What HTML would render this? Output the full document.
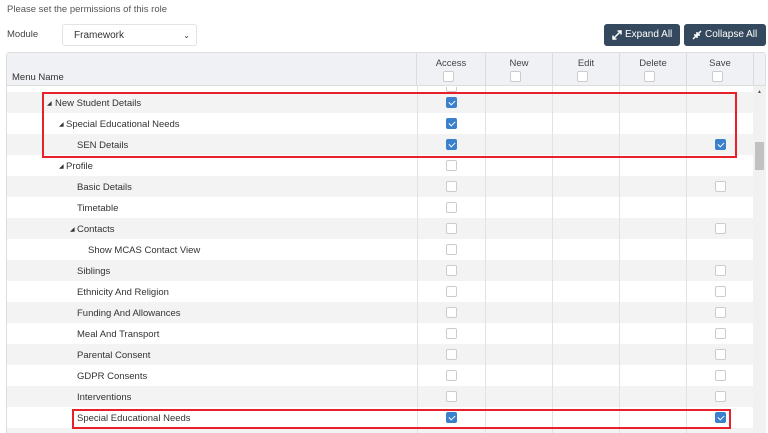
<!DOCTYPE html>
<html style="width:768px;height:433px;overflow:hidden"><head><style>
*{margin:0;padding:0;box-sizing:border-box}
body{width:768px;height:433px;overflow:hidden;background:#fff;font-family:"Liberation Sans",sans-serif;font-size:9.5px;color:#333;position:relative}
.a{position:absolute}
.btn{position:absolute;top:24px;height:22px;background:#34495e;color:#fff;border-radius:3px;font-size:10px;line-height:22px;padding-left:21px}
.row{position:absolute;left:7px;width:746px;height:21px}
.g{background:#f3f3f3}
.row span{position:absolute;top:1px;line-height:21px;white-space:nowrap}
.vl{position:absolute;top:86px;height:347px;width:1px;background:#e2e2e2}
.cb{position:absolute;width:11px;height:11px;border:1px solid #ccc;border-radius:2px;background:#fff}
.ck{background:#3a80cc;border-color:#3a80cc}
.ck:after{content:"";position:absolute;left:3px;top:1px;width:3px;height:5px;border:solid #fff;border-width:0 1.3px 1.3px 0;transform:rotate(45deg)}
.tri{font-size:6px}
.hd{position:absolute;top:58px;font-size:9.5px;color:#444;text-align:center}
</style></head><body>
<div class="a" style="left:7px;top:4px;color:#555;font-size:9.5px">Please set the permissions of this role</div>
<div class="a" style="left:7px;top:29px;color:#444">Module</div>
<div class="a" style="left:62px;top:24px;width:135px;height:22px;border:1px solid #e3e3e3;border-radius:3px;line-height:21px;padding-left:11px;font-size:10px">Framework<span style="position:absolute;right:6px;top:0;font-size:8px">&#8964;</span></div>
<div class="btn" style="left:604px;width:76px"><svg class="a" style="left:8px;top:6px" width="10" height="10" viewBox="0 0 10 10"><path d="M1 9L9 1M5.5 1H9V4.5M1 5.5V9H4.5" stroke="#fff" stroke-width="1.5" fill="none"/></svg>Expand All</div>
<div class="btn" style="left:684px;width:82px"><svg class="a" style="left:8px;top:6px" width="10" height="10" viewBox="0 0 10 10"><path d="M1 9L9 1M2 5H5V8M5 2V5H8" stroke="#fff" stroke-width="1.5" fill="none"/></svg>Collapse All</div>
<div class="a" style="left:6px;top:52px;width:760px;height:381px;border:1px solid #ddd;border-bottom:0;border-radius:3px 3px 0 0"></div>
<div class="a" style="left:7px;top:53px;width:758px;height:33px;background:#eff1f4;border-bottom:1px solid #ddd"></div>
<div class="a" style="left:12px;top:72px;color:#333">Menu Name</div>
<div class="a" style="left:416px;top:53px;width:1px;height:33px;background:#dcdcdc"></div>
<div class="a" style="left:485px;top:53px;width:1px;height:33px;background:#dcdcdc"></div>
<div class="a" style="left:552px;top:53px;width:1px;height:33px;background:#dcdcdc"></div>
<div class="a" style="left:619px;top:53px;width:1px;height:33px;background:#dcdcdc"></div>
<div class="a" style="left:686px;top:53px;width:1px;height:33px;background:#dcdcdc"></div>
<div class="a" style="left:753px;top:53px;width:1px;height:33px;background:#dcdcdc"></div>
<div class="hd" style="left:417px;width:68px">Access</div>
<div class="hd" style="left:486px;width:66px">New</div>
<div class="hd" style="left:553px;width:66px">Edit</div>
<div class="hd" style="left:620px;width:66px">Delete</div>
<div class="hd" style="left:687px;width:66px">Save</div>
<div class="cb" style="left:443px;top:71px"></div><div class="cb" style="left:510px;top:71px"></div><div class="cb" style="left:577px;top:71px"></div><div class="cb" style="left:644px;top:71px"></div><div class="cb" style="left:712px;top:71px"></div>

<div class="row g" style="top:92px"><span style="left:40px"><span class="tri">&#9698;</span></span><span style="left:48px">New Student Details</span></div>
<div class="row" style="top:113px"><span style="left:52px"><span class="tri">&#9698;</span></span><span style="left:59px">Special Educational Needs</span></div>
<div class="row g" style="top:134px"><span style="left:70px">SEN Details</span></div>
<div class="row" style="top:155px"><span style="left:52px"><span class="tri">&#9698;</span></span><span style="left:59px">Profile</span></div>
<div class="row g" style="top:176px"><span style="left:70px">Basic Details</span></div>
<div class="row" style="top:197px"><span style="left:70px">Timetable</span></div>
<div class="row g" style="top:218px"><span style="left:63px"><span class="tri">&#9698;</span></span><span style="left:70px">Contacts</span></div>
<div class="row" style="top:239px"><span style="left:81px">Show MCAS Contact View</span></div>
<div class="row g" style="top:260px"><span style="left:70px">Siblings</span></div>
<div class="row" style="top:281px"><span style="left:70px">Ethnicity And Religion</span></div>
<div class="row g" style="top:302px"><span style="left:70px">Funding And Allowances</span></div>
<div class="row" style="top:323px"><span style="left:70px">Meal And Transport</span></div>
<div class="row g" style="top:344px"><span style="left:70px">Parental Consent</span></div>
<div class="row" style="top:365px"><span style="left:70px">GDPR Consents</span></div>
<div class="row g" style="top:386px"><span style="left:70px">Interventions</span></div>
<div class="row" style="top:407px"><span style="left:70px">Special Educational Needs</span></div>
<div class="row g" style="top:428px;height:5px"></div>

<div class="vl" style="left:417px"></div><div class="vl" style="left:485px"></div><div class="vl" style="left:552px"></div><div class="vl" style="left:619px"></div><div class="vl" style="left:686px"></div>
<div class="a" style="left:753px;top:86px;width:13px;height:347px;background:#f1f1f1"></div>
<div class="a" style="left:755px;top:142px;width:9px;height:28px;background:#c1c1c1"></div>
<div class="a" style="left:757px;top:89px;font-size:5px;color:#555">&#9650;</div>

<div class="cb" style="left:446px;top:87px;height:5px;border-top:0;border-radius:0 0 2px 2px"></div>
<div class="cb ck" style="left:446px;top:97px"></div>
<div class="cb ck" style="left:446px;top:118px"></div>
<div class="cb ck" style="left:446px;top:139px"></div>
<div class="cb ck" style="left:715px;top:139px"></div>
<div class="cb" style="left:446px;top:160px"></div>
<div class="cb" style="left:446px;top:181px"></div><div class="cb" style="left:715px;top:181px"></div>
<div class="cb" style="left:446px;top:202px"></div>
<div class="cb" style="left:446px;top:223px"></div><div class="cb" style="left:715px;top:223px"></div>
<div class="cb" style="left:446px;top:244px"></div>
<div class="cb" style="left:446px;top:265px"></div><div class="cb" style="left:715px;top:265px"></div>
<div class="cb" style="left:446px;top:286px"></div><div class="cb" style="left:715px;top:286px"></div>
<div class="cb" style="left:446px;top:307px"></div><div class="cb" style="left:715px;top:307px"></div>
<div class="cb" style="left:446px;top:328px"></div><div class="cb" style="left:715px;top:328px"></div>
<div class="cb" style="left:446px;top:349px"></div><div class="cb" style="left:715px;top:349px"></div>
<div class="cb" style="left:446px;top:370px"></div><div class="cb" style="left:715px;top:370px"></div>
<div class="cb" style="left:446px;top:391px"></div><div class="cb" style="left:715px;top:391px"></div>
<div class="cb ck" style="left:446px;top:412px"></div><div class="cb ck" style="left:715px;top:412px"></div>

<div class="a" style="left:42px;top:92px;width:695px;height:66px;border:2px solid #e8202a"></div>
<div class="a" style="left:72px;top:409px;width:659px;height:20px;border:2px solid #e8202a"></div>
</body></html>
